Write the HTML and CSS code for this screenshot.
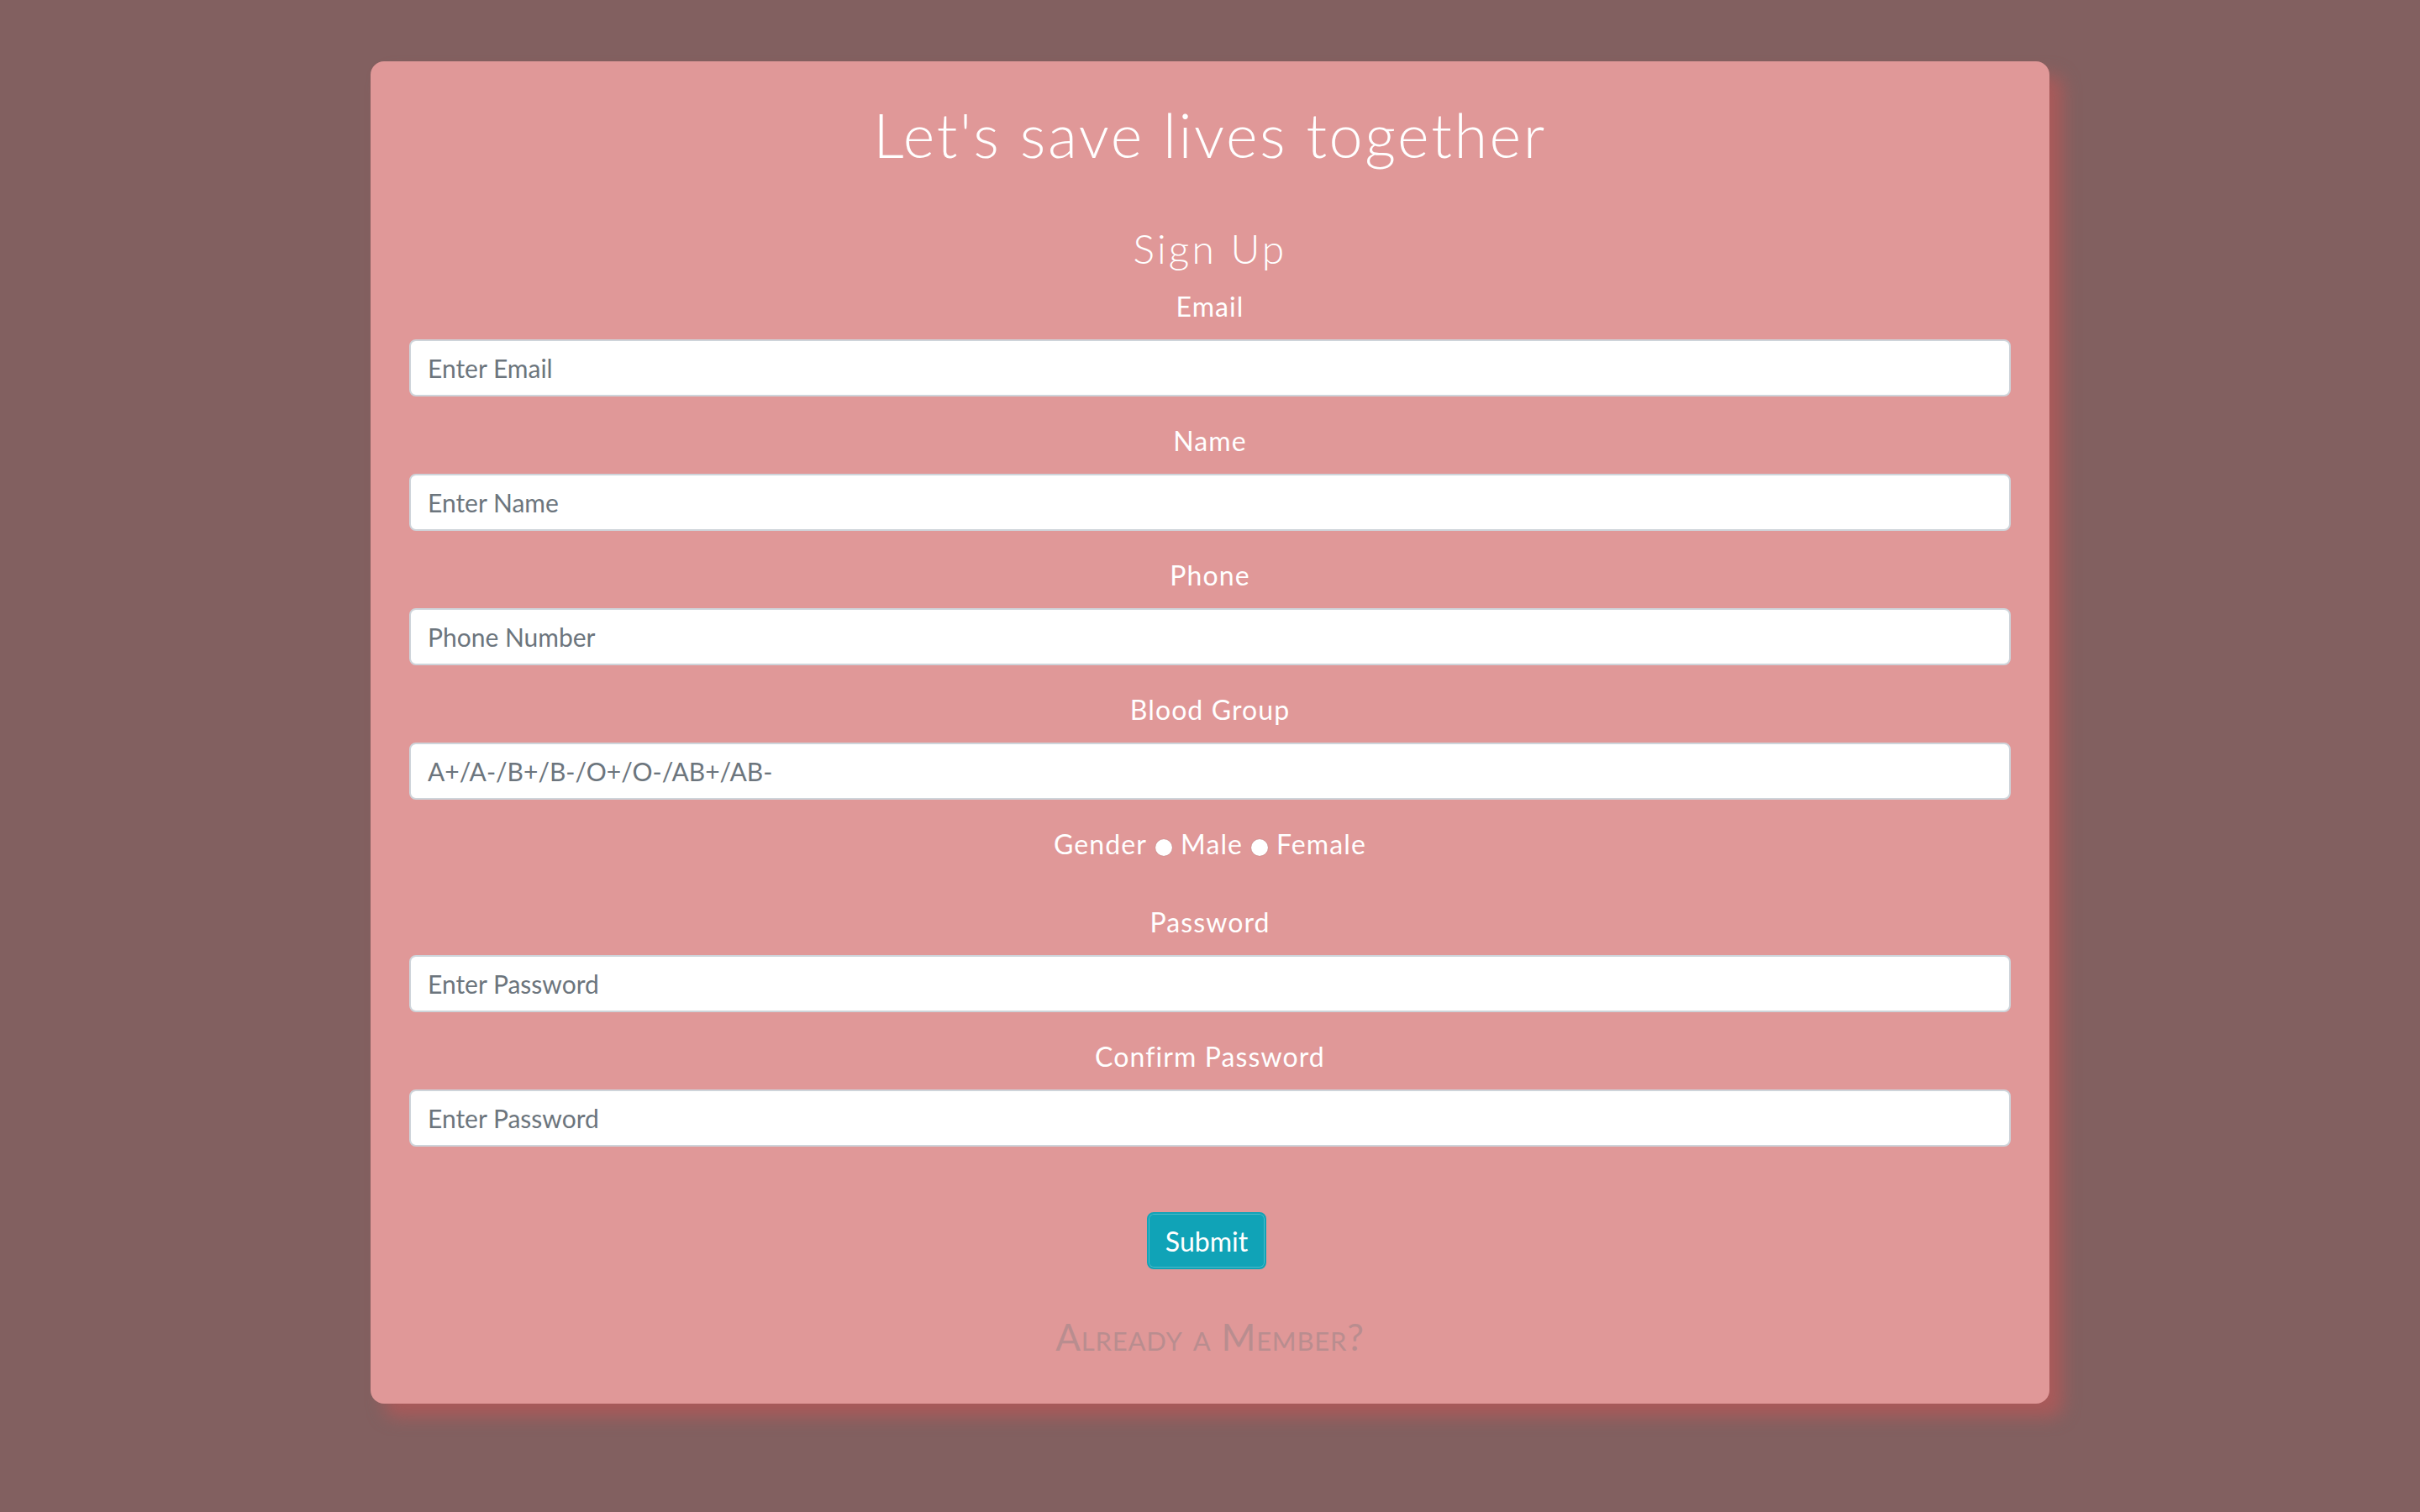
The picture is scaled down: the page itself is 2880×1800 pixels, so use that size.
FILE: index.html
```html
<!DOCTYPE html>
<html lang="en">
<head>
<meta charset="utf-8">
<title>Sign Up</title>
<link rel="stylesheet" href="styles.css">
</head>
<body>
<div class="card">
  <h1 class="title">Let's save lives together</h1>
  <h2 class="subtitle">Sign Up</h2>
  <form class="form">
    <div class="field">
      <label class="label" for="email">Email</label>
      <input class="input" id="email" type="text" placeholder="Enter Email">
    </div>
    <div class="field">
      <label class="label" for="name">Name</label>
      <input class="input" id="name" type="text" placeholder="Enter Name">
    </div>
    <div class="field">
      <label class="label" for="phone">Phone</label>
      <input class="input" id="phone" type="text" placeholder="Phone Number">
    </div>
    <div class="field">
      <label class="label" for="blood">Blood Group</label>
      <input class="input" id="blood" type="text" placeholder="A+/A-/B+/B-/O+/O-/AB+/AB-">
    </div>
    <div class="gender">
      <span>Gender</span>
      <input class="radio" type="radio" name="gender" id="male">
      <label for="male">Male</label>
      <input class="radio" type="radio" name="gender" id="female">
      <label for="female">Female</label>
    </div>
    <div class="field">
      <label class="label" for="pass">Password</label>
      <input class="input" id="pass" type="password" placeholder="Enter Password">
    </div>
    <div class="field">
      <label class="label" for="pass2">Confirm Password</label>
      <input class="input" id="pass2" type="password" placeholder="Enter Password">
    </div>
    <div class="actions">
      <button class="submit" type="button">Submit</button>
    </div>
  </form>
  <p class="member">Already a Member?</p>
</div>
</body>
</html>
```
FILE: styles.css
```css
html, body {
  margin: 0;
  padding: 0;
}
body {
  background: #826060;
  height: 1800px;
  overflow: hidden;
  padding-top: 73px;
  box-sizing: border-box;
  font-family: Lato, "Open Sans", sans-serif;
  color: #ffffff;
}
.card {
  width: 1998px;
  height: 1598px;
  margin: 0 auto;
  box-sizing: border-box;
  padding: 0 46px;
  background: #e09898;
  border-radius: 16px;
  box-shadow: 16px 16px 20px #a95a5a;
  display: flex;
  flex-direction: column;
  overflow: hidden;
}
.title {
  margin: 44px 0 0;
  font-size: 72px;
  line-height: 86px;
  font-weight: 300;
  letter-spacing: 2.6px;
  text-align: center;
}
.subtitle {
  margin: 64px 0 0;
  font-size: 48px;
  line-height: 58px;
  font-weight: 300;
  letter-spacing: 3.2px;
  text-align: center;
}
.form {
  margin-top: 16px;
  display: flex;
  flex-direction: column;
}
.field {
  display: flex;
  flex-direction: column;
  margin-bottom: 29px;
}
.label {
  font-size: 32px;
  line-height: 48px;
  letter-spacing: 1.1px;
  text-align: center;
  margin-bottom: 15px;
}
.input {
  height: 68px;
  box-sizing: border-box;
  border: 2px solid #ced4da;
  border-radius: 8px;
  background: #ffffff;
  padding: 0 20px;
  font-family: Lato, "Open Sans", sans-serif;
  font-size: 30px;
  color: #495057;
  outline: none;
}
.input::placeholder {
  color: #6c757d;
  opacity: 1;
}
.gender {
  display: flex;
  justify-content: center;
  align-items: center;
  font-size: 32px;
  line-height: 48px;
  letter-spacing: 1.1px;
  margin-bottom: 45px;
}
.radio {
  appearance: none;
  -webkit-appearance: none;
  width: 20px;
  height: 20px;
  margin: 8px 10px 0;
  border-radius: 50%;
  background: #ffffff;
  box-shadow: 0 0 1px rgba(0,0,0,0.3);
}
.actions {
  display: flex;
  justify-content: center;
  margin-top: 49px;
}
.submit {
  width: 142px;
  height: 68px;
  margin-right: 8px;
  background: #10a3b7;
  border: 2px solid #10a3b7;
  border-radius: 8px;
  box-shadow: inset 0 0 0 1px rgba(255,255,255,0.25);
  color: #ffffff;
  font-family: Lato, "Open Sans", sans-serif;
  font-size: 32px;
  padding: 0;
}
.member {
  margin: 54px 0 0;
  font-size: 44px;
  line-height: 53px;
  letter-spacing: 0.8px;
  font-variant: small-caps;
  text-align: center;
  color: #b98d8f;
}
```
